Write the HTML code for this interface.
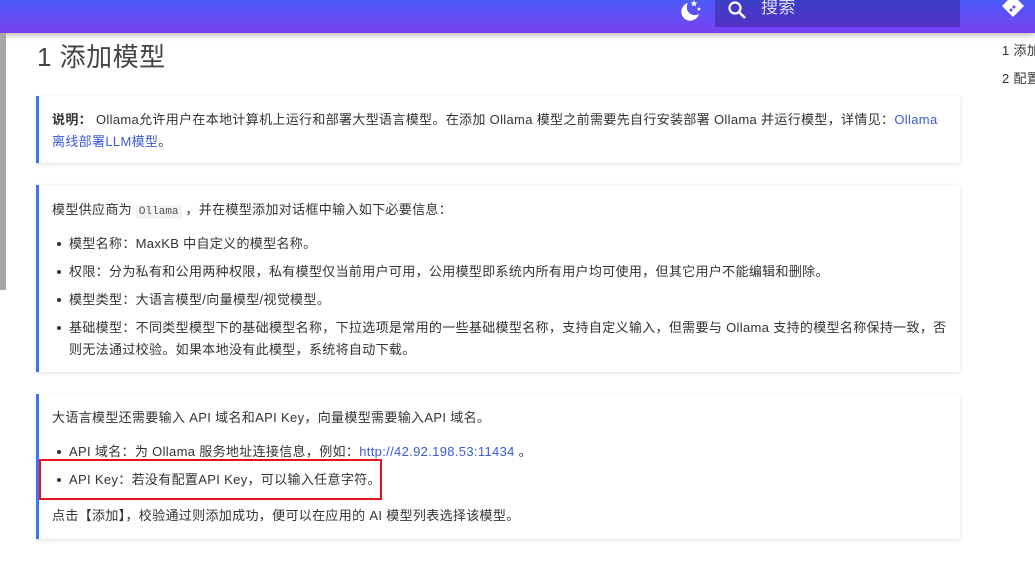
<!DOCTYPE html>
<html><head><meta charset="utf-8"><style>
*{margin:0;padding:0;box-sizing:border-box}
body{width:1035px;height:561px;overflow:hidden;background:#fff;position:relative;font-family:"Liberation Sans","Noto Sans CJK SC",sans-serif;color:#333;font-size:13px}
.hdr{position:absolute;left:0;top:0;width:1035px;height:33px;background:linear-gradient(#4a5cf8,#7b3ff0);box-shadow:0 2px 6px rgba(0,0,0,.3)}
.search{position:absolute;left:715px;top:0;width:245px;height:27px;background:rgba(40,20,130,.4);border-radius:0 0 2px 2px}
.sb{position:absolute;left:0;top:33px;width:6px;height:257px;background:#a8a8a8}
.t{position:absolute;white-space:nowrap;line-height:20px;letter-spacing:0.33px}
.box{position:absolute;left:36px;width:924px;border-left:3px solid #3f72f5;background:#fff;box-shadow:0 1px 4px rgba(0,0,0,.12)}
.dot{position:absolute;width:4px;height:4px;border-radius:50%;background:#333}
a{color:#3a5bd9;text-decoration:none}
code{font-family:"Liberation Mono",monospace;font-size:11px;background:#f3f3f3;padding:1px 3px;color:#555;letter-spacing:0}
</style></head><body>
<div class="hdr">
<svg style="position:absolute;left:678px;top:0" width="26" height="24" viewBox="0 0 26 24"><path d="M10 3a9 9 0 1 0 11 11A8 8 0 0 1 10 3z" fill="#fff"/><path d="M16 0l1 2.2 2.3.3-1.7 1.5.5 2.3-2.1-1.1-2.1 1.1.5-2.3L12.7 2.5 15 2.2z" fill="#fff"/><circle cx="21" cy="9" r="1.4" fill="#fff"/></svg>
<div class="search"></div>
<svg style="position:absolute;left:727px;top:1px" width="22" height="18" viewBox="0 0 22 18"><circle cx="8" cy="7" r="5.5" stroke="#fff" stroke-width="2.2" fill="none"/><path d="M12 11l6 6" stroke="#fff" stroke-width="2.5"/></svg>
<div class="t" style="left:761px;top:-2px;color:#dcdcf5;font-size:17px">搜索</div>
<svg style="position:absolute;left:1002px;top:0" width="22" height="22" viewBox="0 0 22 22"><path d="M11 -5L22 6 11 17 0 6z" fill="#fff"/><circle cx="12" cy="7" r="1.5" fill="#5a4ef0"/><circle cx="9" cy="10" r="1.5" fill="#5a4ef0"/></svg>
</div>
<div class="sb"></div>
<div class="t" style="left:37px;top:40px;font-size:26px;line-height:34px;color:#444;letter-spacing:0.5px">1 添加模型</div>
<div class="t" style="left:1002px;top:41px;font-size:13px">1 添加</div>
<div class="t" style="left:1002px;top:69px;font-size:13px">2 配置</div>

<div class="box" style="top:96px;height:67px"></div>
<div class="t" style="left:52px;top:110px"><b>说明：</b> Ollama允许用户在本地计算机上运行和部署大型语言模型。在添加 Ollama 模型之前需要先自行安装部署 Ollama 并运行模型，详情见：<a>Ollama</a></div>
<div class="t" style="left:52px;top:132px"><a>离线部署LLM模型</a>。</div>

<div class="box" style="top:185px;height:187px"></div>
<div class="t" style="left:52px;top:200px">模型供应商为 <code>Ollama</code> ，并在模型添加对话框中输入如下必要信息：</div>
<div class="dot" style="left:57px;top:242px"></div><div class="t" style="left:69px;top:234px">模型名称：MaxKB 中自定义的模型名称。</div>
<div class="dot" style="left:57px;top:270px"></div><div class="t" style="left:69px;top:262px">权限：分为私有和公用两种权限，私有模型仅当前用户可用，公用模型即系统内所有用户均可使用，但其它用户不能编辑和删除。</div>
<div class="dot" style="left:57px;top:298px"></div><div class="t" style="left:69px;top:290px">模型类型：大语言模型/向量模型/视觉模型。</div>
<div class="dot" style="left:57px;top:326px"></div><div class="t" style="left:69px;top:318px">基础模型：不同类型模型下的基础模型名称，下拉选项是常用的一些基础模型名称，支持自定义输入，但需要与 Ollama 支持的模型名称保持一致，否</div>
<div class="t" style="left:69px;top:340px">则无法通过校验。如果本地没有此模型，系统将自动下载。</div>

<div class="box" style="top:394px;height:145px"></div>
<div class="t" style="left:52px;top:408px">大语言模型还需要输入 API 域名和API Key，向量模型需要输入API 域名。</div>
<div class="dot" style="left:57px;top:450px"></div><div class="t" style="left:69px;top:442px">API 域名：为 Ollama 服务地址连接信息，例如：<a>http://42.92.198.53:11434</a> 。</div>
<div class="dot" style="left:57px;top:478px"></div><div class="t" style="left:69px;top:470px">API Key：若没有配置API Key，可以输入任意字符。</div>
<div style="position:absolute;left:39px;top:459px;width:343px;height:41px;border:2px solid #e0141e"></div>
<div class="t" style="left:52px;top:506px">点击【添加】，校验通过则添加成功，便可以在应用的 AI 模型列表选择该模型。</div>
</body></html>
